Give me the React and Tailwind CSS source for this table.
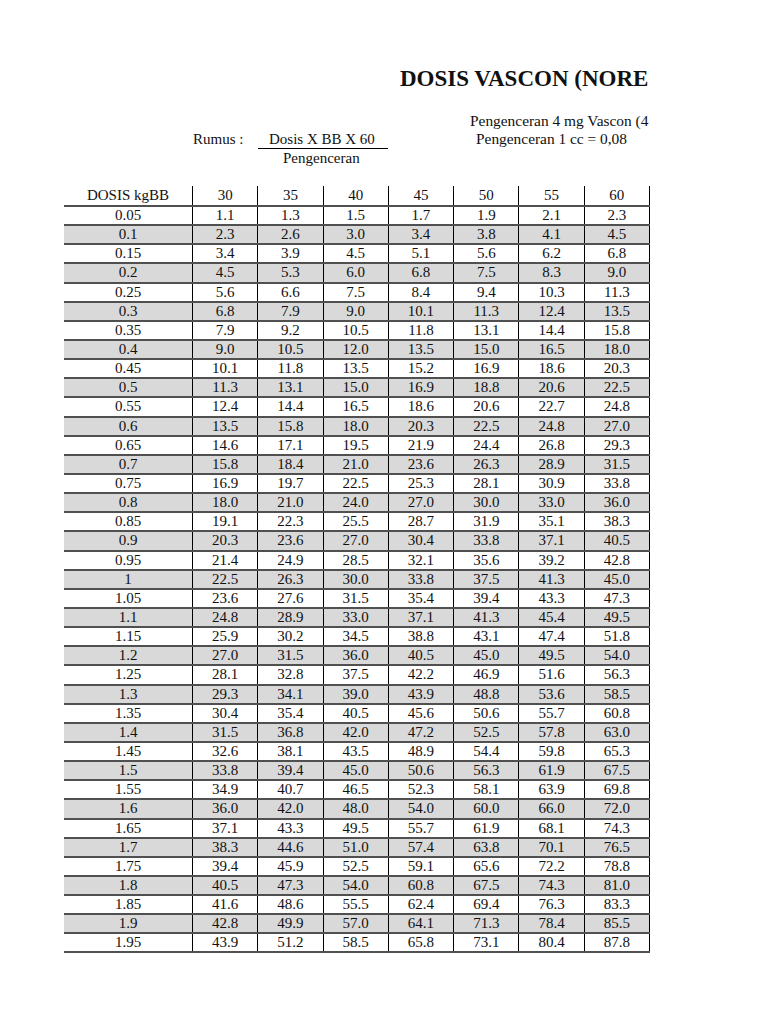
const WEIGHTS = [30, 35, 40, 45, 50, 55, 60];

// values as printed on the sheet (rounded like the spreadsheet did)
const ROWS = [
  ['0.05', '1.1 1.3 1.5 1.7 1.9 2.1 2.3'],
  ['0.1', '2.3 2.6 3.0 3.4 3.8 4.1 4.5'],
  ['0.15', '3.4 3.9 4.5 5.1 5.6 6.2 6.8'],
  ['0.2', '4.5 5.3 6.0 6.8 7.5 8.3 9.0'],
  ['0.25', '5.6 6.6 7.5 8.4 9.4 10.3 11.3'],
  ['0.3', '6.8 7.9 9.0 10.1 11.3 12.4 13.5'],
  ['0.35', '7.9 9.2 10.5 11.8 13.1 14.4 15.8'],
  ['0.4', '9.0 10.5 12.0 13.5 15.0 16.5 18.0'],
  ['0.45', '10.1 11.8 13.5 15.2 16.9 18.6 20.3'],
  ['0.5', '11.3 13.1 15.0 16.9 18.8 20.6 22.5'],
  ['0.55', '12.4 14.4 16.5 18.6 20.6 22.7 24.8'],
  ['0.6', '13.5 15.8 18.0 20.3 22.5 24.8 27.0'],
  ['0.65', '14.6 17.1 19.5 21.9 24.4 26.8 29.3'],
  ['0.7', '15.8 18.4 21.0 23.6 26.3 28.9 31.5'],
  ['0.75', '16.9 19.7 22.5 25.3 28.1 30.9 33.8'],
  ['0.8', '18.0 21.0 24.0 27.0 30.0 33.0 36.0'],
  ['0.85', '19.1 22.3 25.5 28.7 31.9 35.1 38.3'],
  ['0.9', '20.3 23.6 27.0 30.4 33.8 37.1 40.5'],
  ['0.95', '21.4 24.9 28.5 32.1 35.6 39.2 42.8'],
  ['1', '22.5 26.3 30.0 33.8 37.5 41.3 45.0'],
  ['1.05', '23.6 27.6 31.5 35.4 39.4 43.3 47.3'],
  ['1.1', '24.8 28.9 33.0 37.1 41.3 45.4 49.5'],
  ['1.15', '25.9 30.2 34.5 38.8 43.1 47.4 51.8'],
  ['1.2', '27.0 31.5 36.0 40.5 45.0 49.5 54.0'],
  ['1.25', '28.1 32.8 37.5 42.2 46.9 51.6 56.3'],
  ['1.3', '29.3 34.1 39.0 43.9 48.8 53.6 58.5'],
  ['1.35', '30.4 35.4 40.5 45.6 50.6 55.7 60.8'],
  ['1.4', '31.5 36.8 42.0 47.2 52.5 57.8 63.0'],
  ['1.45', '32.6 38.1 43.5 48.9 54.4 59.8 65.3'],
  ['1.5', '33.8 39.4 45.0 50.6 56.3 61.9 67.5'],
  ['1.55', '34.9 40.7 46.5 52.3 58.1 63.9 69.8'],
  ['1.6', '36.0 42.0 48.0 54.0 60.0 66.0 72.0'],
  ['1.65', '37.1 43.3 49.5 55.7 61.9 68.1 74.3'],
  ['1.7', '38.3 44.6 51.0 57.4 63.8 70.1 76.5'],
  ['1.75', '39.4 45.9 52.5 59.1 65.6 72.2 78.8'],
  ['1.8', '40.5 47.3 54.0 60.8 67.5 74.3 81.0'],
  ['1.85', '41.6 48.6 55.5 62.4 69.4 76.3 83.3'],
  ['1.9', '42.8 49.9 57.0 64.1 71.3 78.4 85.5'],
  ['1.95', '43.9 51.2 58.5 65.8 73.1 80.4 87.8'],
];

const cell = 'flex items-center justify-center border-r border-black leading-none';

export default function App() {
  return (
    <div className="w-[768px] h-[1024px] bg-white text-[#111] font-['Liberation_Serif','Times_New_Roman',serif]">
      <div className="pt-[66px] pl-[400px] text-[23px] font-bold leading-[26px]">
        DOSIS VASCON (NORE
      </div>

      <div className="mt-[20px] pl-[470px] text-[15.4px] leading-[18px]">
        Pengenceran 4 mg Vascon (4
      </div>

      <div className="flex text-[15px] leading-[18px]">
        <div className="pl-[193px] w-[258px]">Rumus :</div>
        <div className="w-[130px]">
          <div className="pl-[11px] border-b border-black">Dosis X BB X 60</div>
          <div className="pl-[25px]">Pengenceran</div>
        </div>
        <div className="pl-[88px] text-[15.4px]">Pengenceran 1 cc = 0,08</div>
      </div>

      <div className="mt-[19px] ml-[64px] w-[586px] text-[15px]">
        <div className="grid grid-cols-[129px_repeat(7,1fr)] h-[21px] border-b-2 border-[#505050]">
          <div className={cell}>DOSIS kgBB</div>
          {WEIGHTS.map((w) => (
            <div key={w} className={cell}>
              {w}
            </div>
          ))}
        </div>

        {ROWS.map(([dose, vals], r) => (
          <div
            key={dose}
            className={
              'grid grid-cols-[129px_repeat(7,1fr)] h-[19.15px] border-b-2 border-[#505050] ' +
              (r % 2 === 1 ? 'bg-[#d9d9d9]' : 'bg-white')
            }
          >
            <div className={cell}>{dose}</div>
            {vals.split(' ').map((v, i) => (
              <div key={i} className={cell}>
                {v}
              </div>
            ))}
          </div>
        ))}
      </div>
    </div>
  );
}
